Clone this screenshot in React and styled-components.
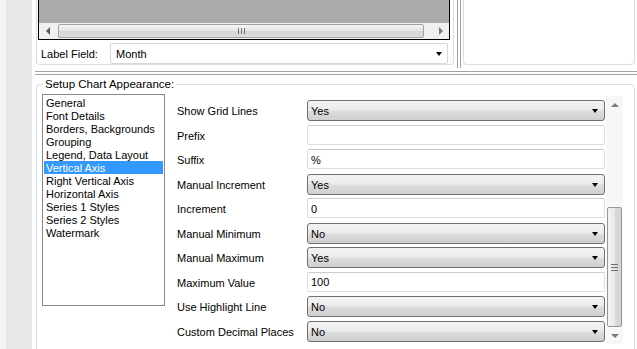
import React from 'react'
import styled, { createGlobalStyle, css } from 'styled-components'

const GlobalStyle = createGlobalStyle`
  html, body {
    margin: 0;
    padding: 0;
    background: #fff;
  }
  body {
    font-family: "Liberation Sans", Arial, sans-serif;
    font-size: 11px;
    color: #000;
    overflow: hidden;
  }
`

const Window = styled.div`
  display: flex;
  width: 637px;
  height: 349px;
  overflow: hidden;
`

const SideStrip = styled.div`
  flex-shrink: 0;
  width: 26px;
  border-left: 6px solid #f4f4f4;
  background: #e8e8e8;
`

const Main = styled.div`
  flex: 1;
  display: flex;
  flex-direction: column;
  min-width: 0;
`

const TopRow = styled.div`
  display: flex;
  align-items: flex-start;
  flex-shrink: 0;
  height: 65px;
  margin: 0 2px 0 4px;
`

const ChartGroup = styled.div`
  box-sizing: border-box;
  width: 418px;
  height: 65px;
  border: 1px solid #d5dfe5;
  border-top: none;
  border-radius: 0 0 4px 4px;
  padding-left: 1px;
  display: flex;
  flex-direction: column;
`

const Preview = styled.div`
  box-sizing: border-box;
  width: 412px;
  border: 1px solid #000;
  border-top: none;
  display: flex;
  flex-direction: column;
`

const PreviewCanvas = styled.div`
  height: 23px;
  background: #ababab;
`

const HScroll = styled.div`
  height: 16px;
  display: flex;
  align-items: center;
  background: #f0f0f0;
`

const ArrowButton = styled.div`
  flex-shrink: 0;
  width: 17px;
  height: ${p => (p.$vertical ? '17px' : '16px')};
  display: flex;
  align-items: center;
  justify-content: center;
`

const Triangle = styled.span`
  width: 0;
  height: 0;
  ${p => p.$dir === 'left' && css`
    border-top: 4px solid transparent;
    border-bottom: 4px solid transparent;
    border-right: 4px solid #5a5a5a;
  `}
  ${p => p.$dir === 'right' && css`
    border-top: 4px solid transparent;
    border-bottom: 4px solid transparent;
    border-left: 4px solid #7a7a7a;
  `}
  ${p => p.$dir === 'up' && css`
    border-left: 4px solid transparent;
    border-right: 4px solid transparent;
    border-bottom: 4px solid #7a7a7a;
  `}
  ${p => p.$dir === 'down' && css`
    border-left: ${p.$size || 4}px solid transparent;
    border-right: ${p.$size || 4}px solid transparent;
    border-top: 4px solid ${p.$color || '#7a7a7a'};
  `}
`

const HThumb = styled.div`
  box-sizing: border-box;
  width: 366px;
  height: 14px;
  margin: 0 8px 0 2px;
  border: 1px solid #a3a3a3;
  border-radius: 2px;
  background: linear-gradient(#f6f6f6, #e6e6e6 50%, #d6d6d6 51%, #dcdcdc);
  display: flex;
  align-items: center;
  justify-content: center;
  gap: 2px;
`

const GripLine = styled.span`
  background: #6f6f6f;
  ${p => (p.$vertical
    ? css`width: 7px; height: 1px;`
    : css`width: 1px; height: 6px;`)}
`

const LabelFieldRow = styled.div`
  display: flex;
  align-items: center;
  height: 21px;
  margin-top: 3px;
`

const FieldLabel = styled.span`
  width: 69px;
  padding-left: 3px;
`

const Combo = styled.div`
  box-sizing: border-box;
  width: ${p => p.$width}px;
  height: 21px;
  display: flex;
  align-items: center;
  justify-content: space-between;
  padding: 1px ${p => (p.$flat ? 5 : 6)}px 0 ${p => (p.$flat ? 5 : 3)}px;
  border-radius: ${p => (p.$flat ? 2 : 3)}px;
  ${p => (p.$flat
    ? css`
      border: 1px solid #d4d8dc;
      background: #fff;
    `
    : css`
      border: 1px solid #707070;
      background: linear-gradient(#f3f3f3, #ebebeb 48%, #dddddd 52%, #cfcfcf);
    `)}
`

const TextBox = styled.div`
  box-sizing: border-box;
  width: 298px;
  height: 20px;
  display: flex;
  align-items: center;
  padding: 1px 0 0 3px;
  border: 1px solid #dadde2;
  border-top-color: #c9ccd1;
  border-radius: 2px;
  background: #fff;
`

const VDivider = styled.div`
  flex-shrink: 0;
  width: 2px;
  height: 68px;
  margin-left: 3px;
  border-left: 1px solid #a2a2a2;
  border-right: 1px solid #a2a2a2;
`

const SideBox = styled.div`
  flex: 1;
  box-sizing: border-box;
  height: 65px;
  margin-left: 2px;
  border: 1px solid #d5dfe5;
  border-top: none;
  border-radius: 0 0 4px 4px;
`

const HSeparator = styled.div`
  flex-shrink: 0;
  height: 2px;
  margin: 6px 0 0 3px;
  border-top: 1px solid #a2a2a2;
  border-bottom: 1px solid #a2a2a2;
`

const SetupGroup = styled.fieldset`
  flex-shrink: 0;
  margin: 3px 2px 0 4px;
  padding: 0;
  min-width: 0;
  border: 1px solid #d5dfe5;
  border-radius: 4px;
  height: 330px;
`

const Legend = styled.legend`
  margin-left: 6px;
  padding: 0 2px;
  line-height: 13px;
  font-size: 11.5px;
`

const SetupBody = styled.div`
  display: flex;
  align-items: flex-start;
  padding: 3px 0 0 5px;
`

const ListBox = styled.div`
  box-sizing: border-box;
  flex-shrink: 0;
  width: 123px;
  height: 212px;
  padding: 1px;
  border: 1px solid #828790;
  background: #fff;
`

const ListItem = styled.div`
  height: 13px;
  line-height: 14px;
  padding-left: 2px;
  white-space: nowrap;
  ${p => p.$selected && css`
    background: #3399ff;
    color: #fff;
  `}
`

const PropGrid = styled.div`
  display: grid;
  grid-template-columns: 130px 298px;
  grid-auto-rows: 24.5px;
  align-items: start;
  margin: 6px 0 0 12px;
`

const PropLabel = styled.div`
  height: 21px;
  line-height: 22px;
  white-space: nowrap;
`

const VScroll = styled.div`
  box-sizing: border-box;
  flex-shrink: 0;
  width: 17px;
  height: 248px;
  margin: 2px 0 0 1px;
  display: flex;
  flex-direction: column;
  background: #f7f7f7;
`

const VTrack = styled.div`
  flex: 1;
`

const VThumb = styled.div`
  box-sizing: border-box;
  width: 15px;
  height: 120px;
  margin: 94px 1px 0;
  border: 1px solid #979797;
  border-radius: 2px;
  background: linear-gradient(90deg, #f4f4f4, #e8e8e8 50%, #d9d9d9 51%, #d4d4d4);
  display: flex;
  flex-direction: column;
  align-items: center;
  justify-content: center;
  gap: 2px;
`

const categories = [
  'General',
  'Font Details',
  'Borders, Backgrounds',
  'Grouping',
  'Legend, Data Layout',
  'Vertical Axis',
  'Right Vertical Axis',
  'Horizontal Axis',
  'Series 1 Styles',
  'Series 2 Styles',
  'Watermark',
]

const props = [
  { label: 'Show Grid Lines', type: 'combo', value: 'Yes' },
  { label: 'Prefix', type: 'text', value: '' },
  { label: 'Suffix', type: 'text', value: '%' },
  { label: 'Manual Increment', type: 'combo', value: 'Yes' },
  { label: 'Increment', type: 'text', value: '0' },
  { label: 'Manual Minimum', type: 'combo', value: 'No' },
  { label: 'Manual Maximum', type: 'combo', value: 'Yes' },
  { label: 'Maximum Value', type: 'text', value: '100' },
  { label: 'Use Highlight Line', type: 'combo', value: 'No' },
  { label: 'Custom Decimal Places', type: 'combo', value: 'No' },
]

function App() {
  return (
    <Window>
      <GlobalStyle />
      <SideStrip />
      <Main>
        <TopRow>
          <ChartGroup>
            <Preview>
              <PreviewCanvas />
              <HScroll>
                <ArrowButton><Triangle $dir="left" /></ArrowButton>
                <HThumb>
                  <GripLine /><GripLine /><GripLine />
                </HThumb>
                <ArrowButton><Triangle $dir="right" /></ArrowButton>
              </HScroll>
            </Preview>
            <LabelFieldRow>
              <FieldLabel>Label Field:</FieldLabel>
              <Combo $flat $width={338}>
                <span>Month</span>
                <Triangle $dir="down" $size={3.5} $color="#000" />
              </Combo>
            </LabelFieldRow>
          </ChartGroup>
          <VDivider />
          <SideBox />
        </TopRow>
        <HSeparator />
        <SetupGroup>
          <Legend>Setup Chart Appearance:</Legend>
          <SetupBody>
            <ListBox>
              {categories.map((c, idx) => (
                <ListItem key={idx} $selected={c === 'Vertical Axis'}>{c}</ListItem>
              ))}
            </ListBox>
            <PropGrid>
              {props.map((p, idx) => (
                <React.Fragment key={idx}>
                  <PropLabel>{p.label}</PropLabel>
                  {p.type === 'combo' ? (
                    <Combo $width={298}>
                      <span>{p.value}</span>
                      <Triangle $dir="down" $size={3.5} $color="#000" />
                    </Combo>
                  ) : (
                    <TextBox>{p.value}</TextBox>
                  )}
                </React.Fragment>
              ))}
            </PropGrid>
            <VScroll>
              <ArrowButton $vertical><Triangle $dir="up" /></ArrowButton>
              <VTrack>
                <VThumb>
                  <GripLine $vertical /><GripLine $vertical /><GripLine $vertical />
                </VThumb>
              </VTrack>
              <ArrowButton $vertical><Triangle $dir="down" /></ArrowButton>
            </VScroll>
          </SetupBody>
        </SetupGroup>
      </Main>
    </Window>
  )
}

export default App
